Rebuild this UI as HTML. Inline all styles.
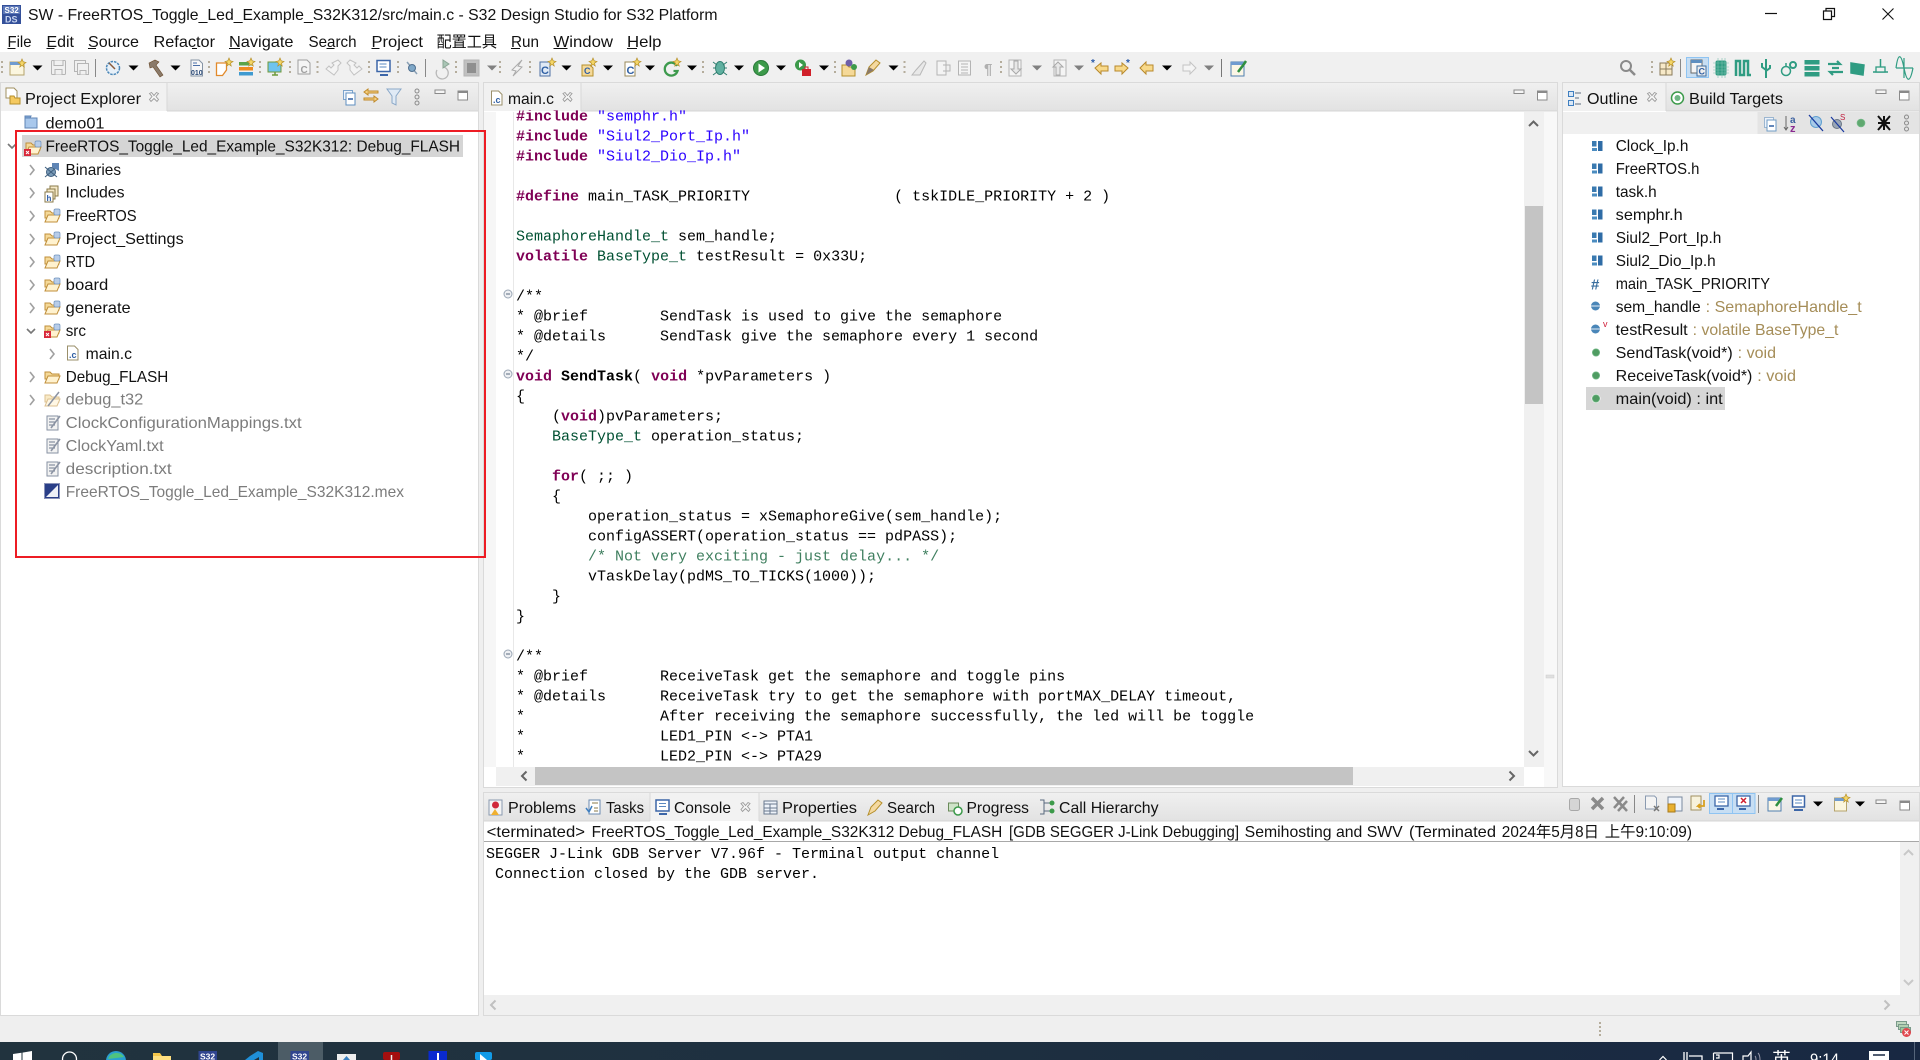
<!DOCTYPE html>
<html lang="en"><head><meta charset="utf-8"><title>S32 Design Studio</title>
<style>
html,body{margin:0;padding:0;background:#fff;width:1920px;height:1060px;overflow:hidden}
svg{display:block}
text{font-family:"Liberation Sans","Noto Sans CJK SC",sans-serif;font-size:15.6px;fill:#111;white-space:pre}
.g{fill:#7c7c7c}.d{fill:#a58d58}
.m text,text.m{font-family:"Liberation Mono",monospace;font-size:15px;fill:#000;letter-spacing:0}
.k{fill:#7f0055;font-weight:bold}.s{fill:#2a00ff}.t{fill:#005032}.c{fill:#3f7f6f}.cc{fill:#3f7f5f}.b{font-weight:bold}
</style></head><body>
<svg xmlns="http://www.w3.org/2000/svg" width="1920" height="1060" viewBox="0 0 1920 1060">
<defs>
<linearGradient id="tb" x1="0" y1="0" x2="0" y2="1"><stop offset="0" stop-color="#f0f0f0"/><stop offset="1" stop-color="#e2e2e2"/></linearGradient>
<linearGradient id="tk" x1="0" y1="0" x2="1" y2="0"><stop offset="0" stop-color="#21333e"/><stop offset=".45" stop-color="#1e3040"/><stop offset="1" stop-color="#182842"/></linearGradient>
<clipPath id="code"><rect x="514" y="111" width="1010" height="656"/></clipPath>
<path id="da" d="M-5-2.5h10l-5 5z" fill="#000"/>
<path id="dg" d="M-5-2.5h10l-5 5z" fill="#808080"/>
<path id="ch" d="M-2-5l4 5-4 5" fill="none" stroke="#a0a0a0" stroke-width="1.6"/>
<g id="dots"><rect x="-1" y="-7" width="2" height="2" fill="#b5ad9c"/><rect x="-1" y="-2" width="2" height="2" fill="#b5ad9c"/><rect x="-1" y="3" width="2" height="2" fill="#b5ad9c"/></g>
<g id="fo"><path d="M0 3V-4h5l2 2h7v5z" fill="#f5d998" stroke="#c08f3a"/><path d="M0 7L3 0h12l-3 7z" fill="#fff2cf" stroke="#c08f3a"/><rect x="9" y="-6" width="6" height="6" rx="1.500" fill="#b8cde9" stroke="#6f92bd" stroke-width=".7"/></g>
<g id="fp"><path d="M0 3V-4h5l2 2h7v5z" fill="#f5d998" stroke="#c08f3a"/><path d="M0 7L3 0h12l-3 7z" fill="#fff2cf" stroke="#c08f3a"/></g>
<g id="tf"><path d="M1-6h11v14H1z" fill="#f2f2f2" stroke="#8792a3"/><path d="M3-3h6M3 0h6M3 3h6" stroke="#6e7a8f"/><path d="M5 6l9-12" stroke="#8b93a3" stroke-width="1.6"/></g>
<g id="hd"><rect x="0" y="-5" width="4.5" height="5.5" fill="#3a7ab0"/><rect x="6" y="-5" width="4.5" height="10" fill="#2f6ca6"/><rect x="0" y="2" width="5" height="3" fill="#4b8cc0"/></g>
<g id="gd"><circle r="3.6" fill="#4f9c62" stroke="#6fb583" stroke-width=".8"/></g>
<g id="cl"><path d="M-4.500-4.500l2-1 2.500 3 2.500-3 2 1-2.500 3 2.500 3-1.500 2-3-3-3 3-1.500-2 2.500-3z" fill="#f5f5f5" stroke="#9a9a9a" stroke-width=".9"/></g>
<g id="mn"><rect x="0" y="0" width="10" height="3.500" fill="#f5f5f5" stroke="#8a8a8a"/></g>
<g id="rs"><rect x="0" y="0" width="9.500" height="9" fill="#fff" stroke="#8a8a8a"/><rect x="0" y="0" width="9.500" height="2" fill="#8a8a8a"/></g>
<g id="fd"><circle r="4" fill="#eef0f3" stroke="#9aa6b5"/><path d="M-2 0h4" stroke="#5a6a7f"/></g>
<g id="st"><path d="M0-4l1.200 2.800L4-.5 1.500 1.200 2.200 4 0 2.400-2.200 4-1.500 1.200-4-.5-1.200-1.200z" fill="#f4d667" stroke="#b58f2b" stroke-width=".7"/></g>
<g id="pg"><path d="M0-7h9l3 3v11H0z" fill="#f5f5f5" stroke="#9e9e9e"/></g>
</defs>

<rect width="1920" height="1060" fill="#efefef"/>
<rect width="1920" height="52" fill="#fff"/>

<!-- title bar -->
<rect x="2" y="5" width="19" height="19" fill="#34509a"/><rect x="3" y="6" width="17" height="8" fill="#5c78b8"/>
<text x="4.500" y="13" style="font-size:8px;fill:#fff" font-weight="bold">S32</text><text x="5" y="22.500" style="font-size:9px;fill:#c8d5f0" font-weight="bold">DS</text>
<text x="28" y="20" textLength="689.500" lengthAdjust="spacingAndGlyphs">SW - FreeRTOS_Toggle_Led_Example_S32K312/src/main.c - S32 Design Studio for S32 Platform</text>
<path d="M1765 13.500h12" stroke="#111" stroke-width="1.200"/>
<path d="M1823.500 11h8v8.500h-8zM1826 11V8.500h8.500v8h-3" fill="none" stroke="#111" stroke-width="1.200"/>
<path d="M1882.500 8.500l11 11M1893.500 8.500l-11 11" stroke="#111" stroke-width="1.100"/>

<!-- menu -->
<g>
<text x="7.500" y="47" textLength="24" lengthAdjust="spacingAndGlyphs">File</text>
<text x="46.500" y="47" textLength="27.500" lengthAdjust="spacingAndGlyphs">Edit</text>
<text x="88" y="47" textLength="51" lengthAdjust="spacingAndGlyphs">Source</text>
<text x="153.500" y="47" textLength="61.500" lengthAdjust="spacingAndGlyphs">Refactor</text>
<text x="229" y="47" textLength="64.500" lengthAdjust="spacingAndGlyphs">Navigate</text>
<text x="308.500" y="47" textLength="48" lengthAdjust="spacingAndGlyphs">Search</text>
<text x="371.500" y="47" textLength="51.500" lengthAdjust="spacingAndGlyphs">Project</text>
<text x="436.500" y="47" textLength="60.500" lengthAdjust="spacingAndGlyphs">配置工具</text>
<text x="511" y="47" textLength="28" lengthAdjust="spacingAndGlyphs">Run</text>
<text x="553.500" y="47" textLength="59.500" lengthAdjust="spacingAndGlyphs">Window</text>
<text x="627" y="47" textLength="34.500" lengthAdjust="spacingAndGlyphs">Help</text>
<path d="M7.500 48.500h8M46.500 48.500h8M88 48.500h8M192 48.500h5M229 48.500h11M326.500 48.500h8M371.500 48.500h8M511 48.500h9M553.500 48.500h14M627 48.500h10" stroke="#111"/>
</g>

<!-- main toolbar -->
<rect x="0" y="52" width="1920" height="30" fill="#f0f0f0"/>
<g>
<use href="#dots" x="2" y="68"/>
<rect x="10" y="62" width="14" height="13" fill="#fbf6df" stroke="#b5a36b"/><rect x="10" y="62" width="14" height="3" fill="#6f9bd0"/><use href="#st" x="22" y="63"/>
<use href="#da" x="37.500" y="68"/>
<g fill="#f0f0f0" stroke="#b5b5b5"><rect x="51.500" y="60.500" width="14" height="14" rx="1"/><path d="M54 60.500v5h9v-5M55 74.500v-5h7v5"/></g>
<g fill="#f0f0f0" stroke="#b5b5b5"><rect x="74.500" y="60.500" width="11" height="11"/><rect x="77.500" y="63.500" width="11" height="11"/><path d="M80 74.500v-4h6v4"/></g>
<rect x="95" y="59" width="1" height="18" fill="#888"/>
<circle cx="113" cy="68" r="6.500" fill="#e7f0f8" stroke="#4b87b8" stroke-width="1.500" stroke-dasharray="2.500 1"/><path d="M109 63l6 6" stroke="#8a5a3a" stroke-width="1.500"/>
<use href="#da" x="133.500" y="68"/>
<path d="M149 63l6-3 4 2-3 3 7 10-3 2-7-10-3 1z" fill="#8a7a6a" stroke="#6a4a2a" stroke-width=".6"/>
<use href="#da" x="175.500" y="68"/>
<path d="M191 60h8l3.500 3.500V76H191z" fill="#f7f7f7" stroke="#8694a5"/><path d="M193 63h4M193 65.500h7" stroke="#4a6fa8"/><text x="191" y="75" style="font-size:7px;fill:#2a4a78" font-weight="bold">010</text>
<use href="#dots" x="209" y="68"/>
<path d="M216.500 63h10v7l-4 5.500h-6z" fill="#fff" stroke="#e28a2b" stroke-width="1.300"/><use href="#st" x="229" y="62"/>
<rect x="239" y="62" width="13" height="3.500" fill="#5aa348"/><rect x="239" y="67" width="14" height="3.500" fill="#ee8a1f"/><rect x="239" y="72" width="14" height="3.500" fill="#3f9ad0"/><use href="#st" x="251" y="62"/>
<use href="#dots" x="260" y="68"/>
<rect x="268" y="62" width="13" height="10" fill="#6fc3ee" stroke="#6f9a3a"/><path d="M272 75h6M275 72v3" stroke="#6f9a3a" stroke-width="1.500"/><use href="#st" x="280" y="62"/>
<use href="#dots" x="290" y="68"/>
<use href="#pg" x="298" y="67"/><text x="300.500" y="73" style="font-size:10px;fill:#a0a0a0" font-weight="bold">C</text>
<use href="#dots" x="317.500" y="68"/>
<path d="M338 60l3 3-3 3v4l-4 5-8-6 3-3 2 2 3-3-2-2z" fill="#f4f4f4" stroke="#c2c2c2"/>
<path d="M350 60l-3 3 3 3v4l4 5 8-6-3-3-2 2-3-3 2-2z" fill="#f4f4f4" stroke="#c2c2c2"/>
<use href="#dots" x="369" y="68"/>
<rect x="377" y="60.500" width="13" height="11" fill="#fff" stroke="#3c66a8" stroke-width="1.500"/><path d="M379.500 64h7M379.500 67h7" stroke="#5a88c0"/><path d="M380 75h8" stroke="#3c66a8" stroke-width="2"/>
<use href="#dots" x="398" y="68"/>
<path d="M407 62l10 12" stroke="#8aa0b5" stroke-width="1.500"/><circle cx="412" cy="68" r="3.500" fill="#7fa8c8" stroke="#4f6f8f"/>
<rect x="425" y="59" width="1" height="18" fill="#888"/>
<path d="M437 70a6 6 0 1 0 6-3" fill="none" stroke="#b8b8b8" stroke-width="1.300"/><path d="M443 60l6 4-6 4z" fill="#a9c5b5" stroke="#8aa595"/>
<use href="#dots" x="456" y="68"/>
<rect x="464" y="60" width="15" height="16" fill="#c0c0c0" stroke="#b5b5b5"/><rect x="467" y="63" width="9" height="10" fill="#8f8f8f"/>
<use href="#dg" x="492" y="68"/>
<use href="#dots" x="500" y="68"/>
<path d="M522 60l-10 10 4 1-3 5 9-9-4-1z" fill="#f2f2f2" stroke="#ababab"/>
<use href="#dots" x="530" y="68"/>
<path d="M540 62h10v14h-10z" fill="#dfe9f5" stroke="#4e6fa3"/><text x="541" y="74" style="font-size:11px;fill:#2f5fa3" font-weight="bold">C</text><use href="#st" x="552" y="62"/>
<use href="#da" x="566.500" y="68"/>
<path d="M582 65h8l3 3v8h-11z" fill="#f5d998" stroke="#b58f2b"/><text x="584" y="74" style="font-size:9px;fill:#2f5fa3" font-weight="bold">C</text><use href="#st" x="593" y="62"/>
<use href="#da" x="608" y="68"/>
<path d="M625 62h10v14h-10z" fill="#fff" stroke="#9a8a5a"/><text x="626.500" y="74" style="font-size:11px;fill:#2f5fa3" font-weight="bold">C</text><use href="#st" x="637" y="62"/>
<use href="#da" x="650" y="68"/>
<path d="M677 66a6.500 6.500 0 1 0 .5 5h-4" fill="none" stroke="#3d9a4d" stroke-width="2.300"/><use href="#st" x="677" y="62"/>
<use href="#da" x="692" y="68"/>
<use href="#dots" x="703" y="68"/>
<ellipse cx="720" cy="68" rx="4.500" ry="6.500" fill="#5fb0a0" stroke="#2f7f70"/><path d="M713 62l4 3M727 62l-4 3M713 68h3M727 68h-3M713 75l4-3M727 75l-4-3" stroke="#2f7f70"/>
<use href="#da" x="739" y="68"/>
<circle cx="761" cy="68" r="7.500" fill="#3c9a4a" stroke="#2a7a3a"/><path d="M758.500 63.500l6.500 4.500-6.500 4.500z" fill="#fff"/>
<use href="#da" x="781" y="68"/>
<circle cx="800.500" cy="65" r="5.500" fill="#3c9a4a"/><path d="M799 62l4 3-4 3z" fill="#fff"/><rect x="802" y="69" width="9" height="7" fill="#d0202a"/><path d="M805 69v-2h3v2" fill="none" stroke="#d0202a"/>
<use href="#da" x="824" y="68"/>
<use href="#dots" x="835" y="68"/>
<path d="M842 76V65h5l2 2h6v9z" fill="#f5d998" stroke="#b58f2b"/><circle cx="849" cy="63" r="3.500" fill="#6e5fa8"/><circle cx="854" cy="67" r="3" fill="#3c9a4a"/>
<path d="M866 75l3-8 7-7 4 3-7 8z" fill="#f4d9a0" stroke="#b58f2b"/><path d="M866 75l3-8 5 3z" fill="#8a7a6a"/>
<use href="#da" x="893.500" y="68"/>
<use href="#dots" x="904.500" y="68"/>
<path d="M912 75l4-5 8-9 2 2-6 12z" fill="#e8e8e8" stroke="#b8b8b8"/>
<path d="M937 61h9v14h-9z" fill="#f4f4f4" stroke="#b4b4b4"/><path d="M943 65h7v6h-7" fill="none" stroke="#b4b4b4"/>
<rect x="958.500" y="61" width="12" height="14" fill="#f4f4f4" stroke="#b4b4b4"/><path d="M961 64h7M961 67h7M961 70h7M961 73h7" stroke="#b4b4b4"/>
<text x="984" y="74" style="font-size:15px;fill:#b0b0b0" font-weight="bold">¶</text>
<use href="#dots" x="1001" y="68"/>
<path d="M1009 60h12v16h-12z" fill="#f4f4f4" stroke="#b4b4b4"/><path d="M1014 61v8h-3l5 5 5-5h-3v-8z" fill="#e8e8e8" stroke="#a8a8a8"/>
<use href="#dg" x="1037" y="68"/>
<path d="M1054 60h12v16h-12z" fill="#f4f4f4" stroke="#b4b4b4"/><path d="M1056 75v-8h-3l5-5 5 5h-3v8z" fill="#e8e8e8" stroke="#a8a8a8"/>
<use href="#dg" x="1079" y="68"/>
<path d="M1095 68l6-5v3h7v5h-7v3z" fill="#f8d98a" stroke="#b8892b"/><text x="1091" y="66" style="font-size:10px;fill:#2a5aa8" font-weight="bold">*</text>
<path d="M1128 68l-6-5v3h-7v5h7v3z" fill="#f8d98a" stroke="#b8892b"/><text x="1126" y="66" style="font-size:10px;fill:#2a5aa8" font-weight="bold">*</text>
<path d="M1140 68l6-6v3h7v6h-7v3z" fill="#f8d98a" stroke="#b8892b"/>
<use href="#da" x="1167" y="68"/>
<path d="M1196 68l-6-6v3h-7v6h7v3z" fill="#f5f5f5" stroke="#c4c4c4"/>
<use href="#dg" x="1209" y="68"/>
<rect x="1221" y="59" width="1" height="18" fill="#777"/>
<rect x="1231" y="62" width="13" height="14" fill="#fbf6e6" stroke="#4f7fb0"/><rect x="1231" y="62" width="13" height="3" fill="#6f9bd0"/><path d="M1238 72l6-8 2-3" stroke="#2f8f3f" stroke-width="2.500"/>

<circle cx="1626" cy="66" r="5" fill="none" stroke="#8a8a8a" stroke-width="2"/><path d="M1630 70l5 5" stroke="#8a8a8a" stroke-width="2.500"/>
<use href="#dots" x="1652" y="68"/>
<rect x="1660" y="63" width="12" height="12" fill="#f7e9c8" stroke="#8a7a5a"/><path d="M1666 63v12M1660 69h12" stroke="#8a7a5a"/><use href="#st" x="1671" y="62"/>
<rect x="1680" y="59" width="1" height="18" fill="#888"/>
<rect x="1686.500" y="57.500" width="22" height="20" fill="#c7def3" stroke="#8fc4f2"/>
<rect x="1691" y="60" width="11" height="13" fill="#f5f5f5" stroke="#6a6a6a"/><rect x="1691" y="60" width="11" height="3" fill="#5f8fc0"/><rect x="1697" y="66" width="9" height="10" fill="#eee" stroke="#3f6fa0"/><text x="1698.500" y="74.500" style="font-size:9px;fill:#2f5fa3" font-weight="bold">C</text>
<g fill="#2f9c82" stroke="#2f9c82">
<rect x="1716" y="61" width="10" height="14" rx="1.500"/><path d="M1713 63h16M1713 67h16M1713 70h16M1713 73h16M1718 58v20M1722 58v20M1725 58v20" stroke-width=".6" fill="none" stroke="#7cbfae"/>
<path d="M1736 76V61h4v14h4V61h4v14h3" fill="none" stroke-width="2.500"/>
<path d="M1766 59v19M1762 63v4l4 3M1770 65v3l-4 3" fill="none" stroke-width="2"/>
<circle cx="1786" cy="71" r="4.500" fill="none" stroke-width="1.500"/><circle cx="1793" cy="65" r="3" stroke-width="2" fill="none"/><path d="M1786 66v-3" stroke-width="1.500"/>
<rect x="1804.500" y="60" width="15" height="4.500" stroke="none"/><rect x="1804.500" y="66" width="15" height="4.500" stroke="none"/><rect x="1804.500" y="72" width="15" height="4.500" stroke="none"/>
<path d="M1828 64h12l-3-3M1843 72h-13l3 3M1832 68h7" fill="none" stroke-width="2.200"/>
<path d="M1851 63l13 2-1 10-12-2z" stroke-width="1.500"/>
<path d="M1873 72h15M1880.500 59v8" fill="none" stroke-width="1.500"/><rect x="1876" y="67" width="9" height="5" fill="#f0f0f0" stroke-width="1.300"/>
<path d="M1896 68c2-15 5-15 8 0s6 15 9 0M1904 58v20M1896 68h17" fill="none" stroke-width="1.200"/>
</g>
</g>

<!-- left panel -->
<rect x=".5" y="82.500" width="478" height="933" fill="#fff" stroke="#dadada"/>
<rect x="1" y="83" width="477" height="28" fill="url(#tb)"/>
<rect x="1" y="83" width="166" height="28" fill="#f1f1f1"/>
<path d="M167 83v28" stroke="#d8d8d8"/><path d="M167 111h311" stroke="#d4d4d4"/>
<path d="M6 88h8l3 3v7H6z" fill="#fff" stroke="#a09060"/><path d="M10 104v-8h4l1 2h5v6z" fill="#f5c95f" stroke="#b58f2b"/>
<text x="25" y="104" textLength="116" lengthAdjust="spacingAndGlyphs">Project Explorer</text>
<use href="#cl" x="154" y="98"/>
<rect x="343.500" y="90.500" width="9" height="9" fill="#eef3fa" stroke="#7da4cc"/><rect x="346" y="93" width="9" height="12" fill="#fff" stroke="#5f8fc0"/><path d="M348 99h5" stroke="#2f5fa3" stroke-width="1.500"/>
<path d="M368 89l-4 3 4 3v-2h10v-2h-10zM374 96l4 3-4 3v-2h-10v-2h10z" fill="#f5d080" stroke="#c08a2b"/>
<path d="M387 89h14l-5 7v9l-4-2v-7z" fill="#e0eaf5" stroke="#8aa8c8"/>
<g fill="none" stroke="#8a8a8a"><circle cx="417" cy="91" r="2"/><circle cx="417" cy="97" r="2"/><circle cx="417" cy="103" r="2"/></g>
<use href="#mn" x="435" y="90"/><use href="#rs" x="458" y="91"/>

<!-- tree -->
<rect x="22" y="135" width="441" height="22" fill="#d5d5d5"/>
<path d="M25 118h12v10H25z" fill="#a9c8ec" stroke="#5f85b5"/><path d="M25 118h5l1-2h-6z" fill="#7fa6d8" stroke="#5f85b5"/>
<text x="45.500" y="128.500" textLength="59" lengthAdjust="spacingAndGlyphs">demo01</text>
<path d="M8 144l4 4 4-4" fill="none" stroke="#777" stroke-width="1.600"/>
<use href="#fo" x="26" y="147"/><rect x="24" y="149" width="7" height="7" fill="#d8283a"/><path d="M26 151l3 3M29 151l-3 3" stroke="#fff"/>
<text x="45.500" y="151.700" textLength="414.500" lengthAdjust="spacingAndGlyphs">FreeRTOS_Toggle_Led_Example_S32K312: Debug_FLASH</text>
<use href="#ch" x="32" y="170"/>
<circle cx="51" cy="172" r="4.500" fill="#7a9bb8" stroke="#3f5f7f"/><path d="M45 167l12 10M45 177l12-10" stroke="#3f5f7f"/><path d="M52 163h7v8l-7-4z" fill="#5f85b5"/>
<text x="65.500" y="174.900" textLength="55.500" lengthAdjust="spacingAndGlyphs">Binaries</text>
<use href="#ch" x="32" y="193"/>
<path d="M50 186h8v10h-8z" fill="#f5e9c8" stroke="#8a7a4a"/><path d="M47 189h8v10h-8z" fill="#f5e9c8" stroke="#8a7a4a"/><path d="M45 192h8v10h-8z" fill="#fff" stroke="#8a7a4a"/><text x="46.500" y="201" style="font-size:8px;fill:#2a5aa8" font-weight="bold">h</text>
<text x="65.500" y="197.700" textLength="59" lengthAdjust="spacingAndGlyphs">Includes</text>

<use href="#ch" x="32" y="216"/><use href="#fo" x="45" y="215"/><text x="65.700" y="221" textLength="71" lengthAdjust="spacingAndGlyphs">FreeRTOS</text>
<use href="#ch" x="32" y="239"/><use href="#fo" x="45" y="238"/><text x="65.700" y="244" textLength="118" lengthAdjust="spacingAndGlyphs">Project_Settings</text>
<use href="#ch" x="32" y="262"/><use href="#fo" x="45" y="261"/><text x="65.700" y="267" textLength="29.300" lengthAdjust="spacingAndGlyphs">RTD</text>
<use href="#ch" x="32" y="285"/><use href="#fo" x="45" y="284"/><text x="65.700" y="290" textLength="42.600" lengthAdjust="spacingAndGlyphs">board</text>
<use href="#ch" x="32" y="308"/><use href="#fo" x="45" y="307"/><text x="65.700" y="313" textLength="65" lengthAdjust="spacingAndGlyphs">generate</text>
<path d="M27 329l4 4 4-4" fill="none" stroke="#777" stroke-width="1.600"/><use href="#fo" x="45" y="330"/><rect x="44" y="331" width="7" height="7" fill="#d8283a"/><path d="M46 333l3 3M49 333l-3 3" stroke="#fff"/>
<text x="65.700" y="336" textLength="20.300" lengthAdjust="spacingAndGlyphs">src</text>
<use href="#ch" x="52" y="354"/>
<path d="M67.500 346h7l3.500 3.500V360h-10.500z" fill="#fff" stroke="#9a8f6a"/><text x="69" y="358" style="font-size:9px;fill:#2f5fa3" font-weight="bold">.c</text>
<text x="85.700" y="359" textLength="46.300" lengthAdjust="spacingAndGlyphs">main.c</text>
<use href="#ch" x="32" y="377"/><use href="#fp" x="45" y="376"/><text x="65.700" y="382" textLength="102.600" lengthAdjust="spacingAndGlyphs">Debug_FLASH</text>
<use href="#ch" x="32" y="400"/><use href="#fp" x="45" y="399" opacity=".55"/><path d="M48 406l11-14" stroke="#8b93a3" stroke-width="1.500"/><text x="65.700" y="404.700" class="g" textLength="77.600" lengthAdjust="spacingAndGlyphs">debug_t32</text>
<use href="#tf" x="46" y="422"/><text x="65.700" y="428" class="g" textLength="236" lengthAdjust="spacingAndGlyphs">ClockConfigurationMappings.txt</text>
<use href="#tf" x="46" y="445"/><text x="65.700" y="451" class="g" textLength="98" lengthAdjust="spacingAndGlyphs">ClockYaml.txt</text>
<use href="#tf" x="46" y="468"/><text x="65.700" y="474" class="g" textLength="106" lengthAdjust="spacingAndGlyphs">description.txt</text>
<rect x="44.500" y="483.500" width="15" height="15" fill="#2a3f88" stroke="#8a92b8"/><path d="M46 497l12-12v12z" fill="#eef0f7"/>
<text x="65.700" y="497" class="g" textLength="338.300" lengthAdjust="spacingAndGlyphs">FreeRTOS_Toggle_Led_Example_S32K312.mex</text>

<!-- editor -->
<rect x="483.500" y="82.500" width="1074" height="705" fill="#fff" stroke="#dadada"/>
<rect x="484" y="83" width="1073" height="28" fill="url(#tb)"/>
<rect x="484" y="83" width="97" height="28" fill="#f1f1f1"/><path d="M581 83v28" stroke="#d8d8d8"/><path d="M581 111h976" stroke="#d4d4d4"/>
<path d="M491.500 91h7l3.500 3.500V105h-10.500z" fill="#fff" stroke="#9a8f6a"/><text x="493" y="103" style="font-size:9px;fill:#2f5fa3" font-weight="bold">.c</text>
<text x="508" y="104" textLength="46" lengthAdjust="spacingAndGlyphs">main.c</text>
<use href="#cl" x="567.500" y="98"/>
<use href="#mn" x="1514" y="90"/><use href="#rs" x="1537.500" y="91"/>
<rect x="484" y="112" width="12" height="655" fill="#f6f6f6"/>
<path d="M513.500 112v655" stroke="#e8e8e8"/>
<use href="#fd" x="508" y="294"/><use href="#fd" x="508" y="374"/><use href="#fd" x="508" y="654"/>
<g class="m" clip-path="url(#code)" transform="translate(0,-.6)">
<text x="516" y="121"><tspan class="k">#include</tspan> <tspan class="s">"semphr.h"</tspan></text>
<text x="516" y="141"><tspan class="k">#include</tspan> <tspan class="s">"Siul2_Port_Ip.h"</tspan></text>
<text x="516" y="161"><tspan class="k">#include</tspan> <tspan class="s">"Siul2_Dio_Ip.h"</tspan></text>
<text x="516" y="201"><tspan class="k">#define</tspan> main_TASK_PRIORITY                ( tskIDLE_PRIORITY + 2 )</text>
<text x="516" y="241"><tspan class="t">SemaphoreHandle_t</tspan> sem_handle;</text>
<text x="516" y="261"><tspan class="k">volatile</tspan> <tspan class="t">BaseType_t</tspan> testResult = 0x33U;</text>
<text x="516" y="301" class="c">/**</text>
<text x="516" y="321" class="c">* @brief        SendTask is used to give the semaphore</text>
<text x="516" y="341" class="c">* @details      SendTask give the semaphore every 1 second</text>
<text x="516" y="361" class="c">*/</text>
<text x="516" y="381"><tspan class="k">void</tspan> <tspan class="b">SendTask</tspan>( <tspan class="k">void</tspan> *pvParameters )</text>
<text x="516" y="401">{</text>
<text x="516" y="421">    (<tspan class="k">void</tspan>)pvParameters;</text>
<text x="516" y="441">    <tspan class="t">BaseType_t</tspan> operation_status;</text>
<text x="516" y="481">    <tspan class="k">for</tspan>( ;; )</text>
<text x="516" y="501">    {</text>
<text x="516" y="521">        operation_status = xSemaphoreGive(sem_handle);</text>
<text x="516" y="541">        configASSERT(operation_status == pdPASS);</text>
<text x="516" y="561">        <tspan class="cc">/* Not very exciting - just delay... */</tspan></text>
<text x="516" y="581">        vTaskDelay(pdMS_TO_TICKS(1000));</text>
<text x="516" y="601">    }</text>
<text x="516" y="621">}</text>
<text x="516" y="661" class="c">/**</text>
<text x="516" y="681" class="c">* @brief        ReceiveTask get the semaphore and toggle pins</text>
<text x="516" y="701" class="c">* @details      ReceiveTask try to get the semaphore with portMAX_DELAY timeout,</text>
<text x="516" y="721" class="c">*               After receiving the semaphore successfully, the led will be toggle</text>
<text x="516" y="741" class="c">*               LED1_PIN &lt;-&gt; PTA1</text>
<text x="516" y="761" class="c">*               LED2_PIN &lt;-&gt; PTA29</text>
</g>
<rect x="1524" y="112" width="20" height="655" fill="#f0f0f0"/>
<rect x="1544" y="112" width="13" height="675" fill="#f8f8f8"/>
<rect x="1525" y="206" width="18" height="198" fill="#c4c4c4"/>
<rect x="1546" y="675" width="8" height="3" fill="#e0e0e0" stroke="#ccc" stroke-width=".5"/>
<path d="M1529 126l4.500-4.500 4.500 4.500M1529 751l4.500 4.500 4.500-4.500" fill="none" stroke="#666" stroke-width="2"/>
<rect x="496" y="767" width="1028" height="19" fill="#f0f0f0"/>
<rect x="535" y="767" width="818" height="18" fill="#c4c4c4"/>
<path d="M526.500 771.500l-4.500 4.500 4.500 4.500M1509.500 771.500l4.500 4.500-4.500 4.500" fill="none" stroke="#666" stroke-width="2"/>

<!-- outline -->
<rect x="1562.500" y="82.500" width="357" height="704" fill="#fff" stroke="#dadada"/>
<rect x="1563" y="83" width="356" height="28" fill="url(#tb)"/>
<rect x="1563" y="83" width="103" height="28" fill="#f1f1f1"/><path d="M1666 83v28" stroke="#d8d8d8"/><path d="M1666 111h254" stroke="#d4d4d4"/>
<g fill="#dbe8f6" stroke="#3f7fc0"><rect x="1568.500" y="91.500" width="5" height="5"/><rect x="1568.500" y="100.500" width="5" height="5"/></g><path d="M1575 93h6M1575 98h4M1575 104h6" stroke="#5a6a7f"/>
<text x="1587" y="104" textLength="51" lengthAdjust="spacingAndGlyphs">Outline</text>
<use href="#cl" x="1652" y="98"/>
<circle cx="1677.500" cy="98" r="6" fill="#fff" stroke="#3c9a4a" stroke-width="1.500"/><circle cx="1677.500" cy="98" r="3" fill="#6fb583"/>
<text x="1689" y="104" textLength="94" lengthAdjust="spacingAndGlyphs">Build Targets</text>
<use href="#mn" x="1876" y="90"/><use href="#rs" x="1899.500" y="91"/>
<rect x="1563" y="112" width="356" height="22" fill="#f0f0f0"/><rect x="1757.500" y="112" width="161.500" height="22" fill="#e4e4e4"/>
<rect x="1764.500" y="117.500" width="9" height="10" fill="#eef3fa" stroke="#9cb6d0"/><rect x="1767" y="120" width="9" height="11" fill="#fff" stroke="#6f9bc5"/><path d="M1769 126h5" stroke="#2f5fa3" stroke-width="1.500"/>
<path d="M1786 116v14M1784 127l2 3 2-3" fill="none" stroke="#666"/><text x="1790" y="123" style="font-size:10px;fill:#3a5f9f" font-weight="bold">a</text><text x="1790" y="132" style="font-size:11px;fill:#8a2a90" font-weight="bold">z</text>
<circle cx="1816" cy="122" r="5.500" fill="#a8cbe8" stroke="#5f9fd0"/><path d="M1809 115l14 16" stroke="#1a3a9f" stroke-width="1.300"/>
<circle cx="1837" cy="124" r="4.500" fill="#9aa6b5" stroke="#6a7685"/><path d="M1831 117l13 15" stroke="#1a3a9f" stroke-width="1.200"/><text x="1840" y="120" style="font-size:8px;fill:#c02040">S</text>
<circle cx="1861" cy="123" r="3.800" fill="#5fa86f" stroke="#6fb583"/>
<path d="M1878 116l12 14M1878 130l12-14M1884 116v14M1878 123h12" stroke="#111" stroke-width="2"/>
<g fill="none" stroke="#8a8a8a"><circle cx="1906.500" cy="117" r="2"/><circle cx="1906.500" cy="123" r="2"/><circle cx="1906.500" cy="129" r="2"/></g>

<use href="#hd" x="1592" y="146"/><text x="1615.700" y="151" textLength="72.700" lengthAdjust="spacingAndGlyphs">Clock_Ip.h</text>
<use href="#hd" x="1592" y="168.500"/><text x="1615.700" y="174" textLength="83.700" lengthAdjust="spacingAndGlyphs">FreeRTOS.h</text>
<use href="#hd" x="1592" y="191.500"/><text x="1615.700" y="197" textLength="41" lengthAdjust="spacingAndGlyphs">task.h</text>
<use href="#hd" x="1592" y="214.500"/><text x="1615.700" y="220" textLength="67" lengthAdjust="spacingAndGlyphs">semphr.h</text>
<use href="#hd" x="1592" y="237.500"/><text x="1615.700" y="243" textLength="105.700" lengthAdjust="spacingAndGlyphs">Siul2_Port_Ip.h</text>
<use href="#hd" x="1592" y="260.500"/><text x="1615.700" y="266" textLength="100" lengthAdjust="spacingAndGlyphs">Siul2_Dio_Ip.h</text>
<text x="1591" y="289.500" style="font-size:15px;fill:#3a6f9f" font-weight="bold">#</text><text x="1615.700" y="289" textLength="154.300" lengthAdjust="spacingAndGlyphs">main_TASK_PRIORITY</text>
<circle cx="1595.500" cy="306" r="4.500" fill="#4a86b8"/><path d="M1591 306h9" stroke="#e6eef6"/><text x="1615.700" y="312" textLength="85" lengthAdjust="spacingAndGlyphs">sem_handle</text><text x="1705.700" y="312" class="d" textLength="156" lengthAdjust="spacingAndGlyphs">: SemaphoreHandle_t</text>
<circle cx="1595.500" cy="329" r="4.500" fill="#4a86b8"/><path d="M1591 329h9" stroke="#e6eef6"/><text x="1603" y="327" style="font-size:9px;fill:#d0203a">v</text><text x="1615.700" y="335" textLength="72" lengthAdjust="spacingAndGlyphs">testResult</text><text x="1692.700" y="335" class="d" textLength="145.700" lengthAdjust="spacingAndGlyphs">: volatile BaseType_t</text>
<use href="#gd" x="1596" y="352.500"/><text x="1615.700" y="358" textLength="117" lengthAdjust="spacingAndGlyphs">SendTask(void*)</text><text x="1737.700" y="358" class="d" textLength="38.300" lengthAdjust="spacingAndGlyphs">: void</text>
<use href="#gd" x="1596" y="375.500"/><text x="1615.700" y="381" textLength="136.700" lengthAdjust="spacingAndGlyphs">ReceiveTask(void*)</text><text x="1757.300" y="381" class="d" textLength="38.700" lengthAdjust="spacingAndGlyphs">: void</text>
<rect x="1586" y="387" width="139" height="23" fill="#d6d6d6"/>
<circle cx="1596" cy="398.500" r="4.500" fill="#fff"/><use href="#gd" x="1596" y="398.500"/><text x="1615.700" y="404" textLength="107" lengthAdjust="spacingAndGlyphs">main(void) : int</text>

<!-- console -->
<rect x="483.500" y="792.500" width="1436" height="223" fill="#fff" stroke="#dadada"/>
<rect x="484" y="793" width="1435" height="28" fill="url(#tb)"/>
<rect x="650" y="793" width="109" height="28" fill="#f2f2f2"/><path d="M650 793v28M759 793v28" stroke="#d8d8d8"/>
<path d="M484 821h166M759 821h1160" stroke="#d4d4d4"/>
<path d="M489 800h13v15h-13z" fill="#f4f4f4" stroke="#8a9ab0"/><circle cx="495.500" cy="805" r="3.500" fill="#d0283a"/><path d="M491 815l4-6 4 6z" fill="#f0b030"/>
<text x="508" y="813" textLength="68" lengthAdjust="spacingAndGlyphs">Problems</text>
<path d="M589 800h11v14h-11z" fill="#fff" stroke="#6a8ab0"/><path d="M586 808l3 4 3-6" fill="none" stroke="#3f7fc0" stroke-width="1.500"/><path d="M592 803h6M594 808h4M594 811h4" stroke="#8a7a4a"/>
<text x="606" y="813" textLength="38" lengthAdjust="spacingAndGlyphs">Tasks</text>
<rect x="656" y="800" width="13" height="11" fill="#fff" stroke="#3c66a8" stroke-width="1.500"/><path d="M659 803.500h7M659 806.500h7" stroke="#5a88c0"/><path d="M659 814h8" stroke="#3c66a8" stroke-width="2"/>
<text x="674" y="813" textLength="57" lengthAdjust="spacingAndGlyphs">Console</text>
<use href="#cl" x="745.500" y="808"/>
<rect x="764" y="801" width="13" height="13" fill="#eef3fa" stroke="#6a7a8f"/><path d="M764 804h13M770 804v10M764 808h13M764 811h13" stroke="#6a7a8f"/>
<text x="782" y="813" textLength="75" lengthAdjust="spacingAndGlyphs">Properties</text>
<path d="M868 815l3-8 7-7 4 3-7 8z" fill="#f4d9a0" stroke="#b58f2b"/>
<text x="887" y="813" textLength="48" lengthAdjust="spacingAndGlyphs">Search</text>
<rect x="948.500" y="803" width="10" height="8" fill="#cfe3c8" stroke="#6a8a5a"/><circle cx="958" cy="811" r="4" fill="#fff" stroke="#3c9a4a" stroke-width="1.500"/>
<text x="966.500" y="813" textLength="62.500" lengthAdjust="spacingAndGlyphs">Progress</text>
<path d="M1040 800h4v14h-4M1044 803h7M1044 811h7" fill="none" stroke="#5a6a7f"/><circle cx="1052" cy="803" r="2.500" fill="#3c9a4a"/><circle cx="1052" cy="811" r="2.500" fill="#3c9a4a"/>
<text x="1059" y="813" textLength="99.500" lengthAdjust="spacingAndGlyphs">Call Hierarchy</text>

<rect x="1569.500" y="798.500" width="10" height="12" rx="2" fill="#d5d5d5" stroke="#a8a8a8"/>
<path d="M1592 798l11 11M1603 798l-11 11" stroke="#8a8a8a" stroke-width="3.500"/>
<path d="M1614 797l10 11M1624 797l-10 11M1618 801l9 10M1627 801l-9 10" stroke="#8a8a8a" stroke-width="2.500"/>
<rect x="1634" y="795" width="1" height="18" fill="#888"/>
<path d="M1645.500 796h9l2 2v11h-11z" fill="#f4f4f4" stroke="#8a9ab0"/><path d="M1654 806l5 5M1659 806l-5 5" stroke="#777" stroke-width="1.500"/>
<rect x="1668" y="797" width="14" height="14" fill="#eef3fa" stroke="#7a8a9f"/><rect x="1668" y="804" width="7" height="8" fill="#e8b030" stroke="#a87a1a"/>
<path d="M1691 796h10v14h-10z" fill="#f7f2dc" stroke="#a09060"/><path d="M1704 800v6h-6l2-2m-2 2l2 2" fill="none" stroke="#d8a020" stroke-width="1.800"/>
<rect x="1709.500" y="793.500" width="23" height="20" fill="#c7def3" stroke="#8fc4f2"/><rect x="1732.500" y="793.500" width="22.500" height="20" fill="#c7def3" stroke="#8fc4f2"/>
<rect x="1715" y="796" width="13" height="10" fill="#fff" stroke="#3c66a8" stroke-width="1.300"/><path d="M1718 799h7M1718 802h7" stroke="#5a88c0"/><path d="M1717 809h7" stroke="#3c66a8" stroke-width="2"/>
<rect x="1737" y="796" width="13" height="10" fill="#fff" stroke="#3c66a8" stroke-width="1.300"/><path d="M1741 798l5 5M1746 798l-5 5" stroke="#d02030" stroke-width="1.500"/><path d="M1739 809h7" stroke="#3c66a8" stroke-width="2"/>
<rect x="1758" y="795" width="1" height="18" fill="#888"/>
<rect x="1768" y="798" width="13" height="13" fill="#fbf6e6" stroke="#4f7fb0"/><rect x="1768" y="798" width="13" height="3" fill="#6f9bd0"/><path d="M1776 806l6-8" stroke="#2f8f3f" stroke-width="2.500"/>
<rect x="1792.500" y="796" width="12" height="11" fill="#fff" stroke="#3c66a8" stroke-width="1.500"/><path d="M1795 800h7M1795 803h7" stroke="#5a88c0"/><path d="M1794 810h9" stroke="#3c66a8" stroke-width="2"/>
<use href="#da" x="1818" y="804"/>
<rect x="1834.500" y="798" width="12" height="13" fill="#fbf6df" stroke="#b5a36b"/><rect x="1834.500" y="798" width="12" height="3" fill="#6f9bd0"/><use href="#st" x="1846" y="798"/>
<use href="#da" x="1860" y="804"/>
<use href="#mn" x="1876" y="800"/><use href="#rs" x="1900" y="801"/>

<text x="486.700" y="837" textLength="98.300" lengthAdjust="spacingAndGlyphs">&lt;terminated&gt;</text>
<text x="591.600" y="837" textLength="410.700" lengthAdjust="spacingAndGlyphs">FreeRTOS_Toggle_Led_Example_S32K312 Debug_FLASH</text>
<text x="1009" y="837" textLength="230" lengthAdjust="spacingAndGlyphs">[GDB SEGGER J-Link Debugging]</text>
<text x="1244.700" y="837" textLength="158" lengthAdjust="spacingAndGlyphs">Semihosting and SWV</text>
<text x="1409" y="837" textLength="87" lengthAdjust="spacingAndGlyphs">(Terminated</text>
<text x="1501.800" y="837" textLength="97.200" lengthAdjust="spacingAndGlyphs">2024年5月8日</text>
<text x="1604.700" y="837" textLength="87.300" lengthAdjust="spacingAndGlyphs">上午9:10:09)</text>
<path d="M484 841.500h1435" stroke="#a8a8a8"/>
<g class="m">
<text x="486" y="858">SEGGER J-Link GDB Server V7.96f - Terminal output channel</text>
<text x="486" y="878"> Connection closed by the GDB server.</text>
</g>
<rect x="1900" y="842" width="19" height="153" fill="#f0f0f0"/>
<rect x="484" y="995" width="1435" height="20" fill="#f0f0f0"/>
<path d="M1904 855l4.500-4.500 4.500 4.500M1904 980l4.500 4.500 4.500-4.500" fill="none" stroke="#c8c8c8" stroke-width="2"/>
<path d="M495.500 1000.500l-4.500 4.500 4.500 4.500M1884.500 1000.500l4.500 4.500-4.500 4.500" fill="none" stroke="#c0c0c0" stroke-width="2"/>

<!-- status bar -->
<g fill="#b5ad9c"><rect x="1599" y="1022" width="2" height="2"/><rect x="1599" y="1026" width="2" height="2"/><rect x="1599" y="1030" width="2" height="2"/><rect x="1599" y="1034" width="2" height="2"/></g>
<g><rect x="1896.500" y="1021.500" width="10" height="5" fill="#c0d8c0" stroke="#7a9a8a"/><rect x="1898.500" y="1024.500" width="10" height="5" fill="#b0d0b0" stroke="#7a9a8a"/><rect x="1900.500" y="1027.500" width="10" height="5" fill="#9cc89c" stroke="#7a9a8a"/><circle cx="1906.500" cy="1032.500" r="4.500" fill="#e0484f"/><path d="M1904.500 1030.500l4 4M1908.500 1030.500l-4 4" stroke="#fff"/></g>

<!-- red annotation -->
<rect x="16" y="131" width="469" height="426" fill="none" stroke="#ed1c24" stroke-width="2"/>

<!-- taskbar -->
<rect x="0" y="1042" width="1920" height="18" fill="url(#tk)"/>
<rect x="278" y="1042" width="45" height="18" fill="#4c5c66"/>
<path d="M13 1054l8.500-1.200V1060H13zM22.500 1052.600L32 1051v9h-9.500z" fill="#fff"/>
<circle cx="69.500" cy="1059" r="7" fill="none" stroke="#fff" stroke-width="1.300"/>
<circle cx="116" cy="1061" r="10" fill="#2a9fd0"/><path d="M108 1059a9 9 0 0 1 16-2z" fill="#4fc37f"/>
<path d="M153 1053h7l2 3h9v4h-18z" fill="#f5c64a"/><rect x="153" y="1056" width="18" height="4" fill="#ffdf80"/>
<rect x="198.500" y="1051" width="18.500" height="9" fill="#30458f"/><text x="200" y="1059.500" style="font-size:8.500px;fill:#fff" font-weight="bold">S32</text>
<path d="M245 1060l5-4 8-5 5 2v7h-4v-3l-5 3z" fill="#1f8fd8"/>
<rect x="290.500" y="1051" width="18.500" height="9" fill="#30458f"/><text x="292" y="1059.500" style="font-size:8.500px;fill:#fff" font-weight="bold">S32</text>
<rect x="337" y="1054" width="19" height="6" fill="#eee"/><path d="M343 1060l3.500-4 3.500 4z" fill="#3a80c0"/>
<rect x="383" y="1052" width="17" height="8" rx="2" fill="#a50f0f"/><path d="M391.500 1055v5" stroke="#eee" stroke-width="1.500"/>
<rect x="428.500" y="1051" width="18.500" height="9" fill="#0a2ad0"/><path d="M438 1053v7" stroke="#fff" stroke-width="2"/>
<rect x="475" y="1052" width="17" height="8" rx="2" fill="#129be8"/><path d="M480 1054l7 6h-7z" fill="#fff"/>
<path d="M1659.500 1060l3.500-3.500 3.500 3.500" fill="none" stroke="#fff" stroke-width="1.200"/>
<path d="M1684 1052v8M1687 1052v8M1689 1056h13v4" fill="none" stroke="#fff" stroke-width="1.300"/>
<path d="M1713.500 1053h19v7M1713.500 1053v7M1716 1055h3v3h-3" fill="none" stroke="#fff" stroke-width="1.200"/>
<path d="M1743 1060v-4h5l3-4v8" fill="none" stroke="#fff" stroke-width="1.200"/><path d="M1755 1056c1 1 1 3 1 4M1758 1053c2 2 2 5 2 7" fill="none" stroke="#99a" stroke-width="1"/>
<text x="1772" y="1066" style="font-size:19px;fill:#fff">英</text>
<text x="1810" y="1064.500" style="font-size:15.500px;fill:#fff" textLength="29" lengthAdjust="spacingAndGlyphs">9:14</text>
<rect x="1869" y="1051" width="20" height="9" fill="#fff"/><path d="M1873 1055h12" stroke="#182842" stroke-width="1.500"/>
<rect x="1914" y="1042" width="1" height="18" fill="#55657a"/>
</svg>
</body></html>
